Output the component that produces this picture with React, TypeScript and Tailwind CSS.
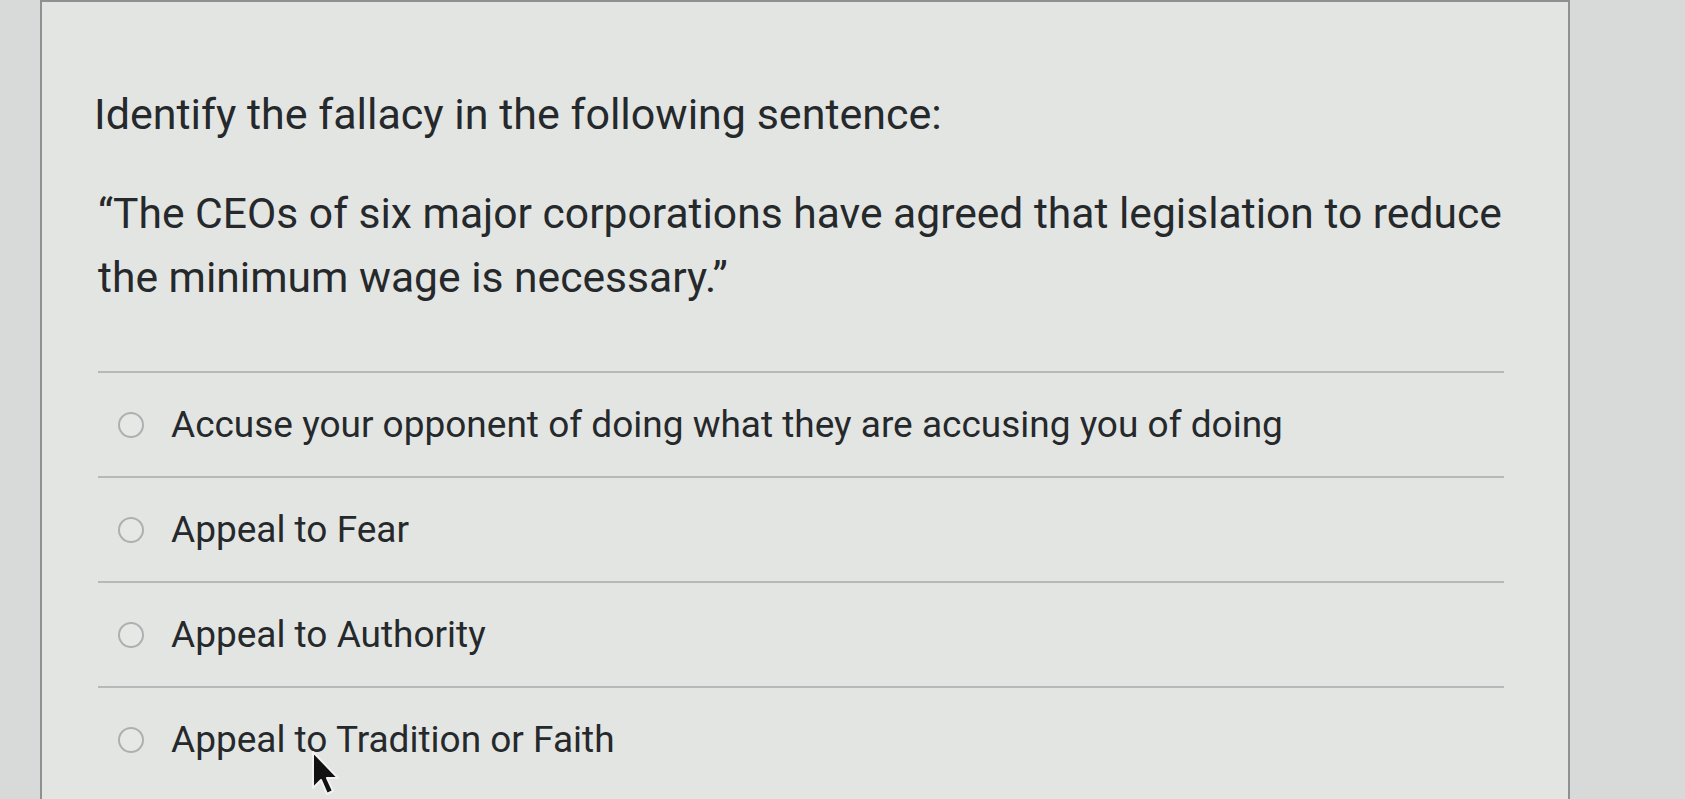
import React from "react";

const options = [
  "Accuse your opponent of doing what they are accusing you of doing",
  "Appeal to Fear",
  "Appeal to Authority",
  "Appeal to Tradition or Faith",
];

export default function App() {
  return (
    <div
      className="relative w-[1685px] h-[799px] overflow-hidden bg-[#d8dad9] flex"
      style={{ fontFamily: "Roboto, 'Noto Sans', Arial, sans-serif" }}
    >
      <div className="ml-[40px] w-[1530px] h-[799px] bg-[#e3e5e3] border-l-2 border-r-2 border-t-2 border-[#8e9191]">
        <div className="pl-[52px] pr-[40px] pt-[80px]">
          <h1 className="text-[43px] leading-[64px] text-[#26292b] font-normal whitespace-nowrap">
            Identify the fallacy in the following sentence:
          </h1>
          <p className="mt-[35px] pl-[4px] text-[42.6px] leading-[64px] text-[#26292b] whitespace-nowrap">
            “The CEOs of six major corporations have agreed that legislation to reduce
            <br />
            the minimum wage is necessary.”
          </p>
          <div className="mt-[62px] ml-[4px] w-[1406px]">
            {options.map((o) => (
              <div
                key={o}
                className="h-[105px] border-t-2 border-[#b6b9b9] flex items-center pl-[20px]"
              >
                <span className="w-[26px] h-[26px] rounded-full border-2 border-[#adb0b0] bg-[#e6e8e6] shrink-0" />
                <span className="ml-[27px] text-[37px] leading-[44px] text-[#26292b] whitespace-nowrap">
                  {o}
                </span>
              </div>
            ))}
          </div>
        </div>
      </div>
      <svg
        className="absolute left-[310px] top-[750px]"
        width="34"
        height="48"
        viewBox="0 0 34 48"
      >
        <path
          d="M3 2 L3 38 L11 30 L17 44 L23 41 L17 28 L28 28 Z"
          fill="#111"
          stroke="#f2f2f2"
          strokeWidth="2"
          strokeLinejoin="round"
        />
      </svg>
    </div>
  );
}
